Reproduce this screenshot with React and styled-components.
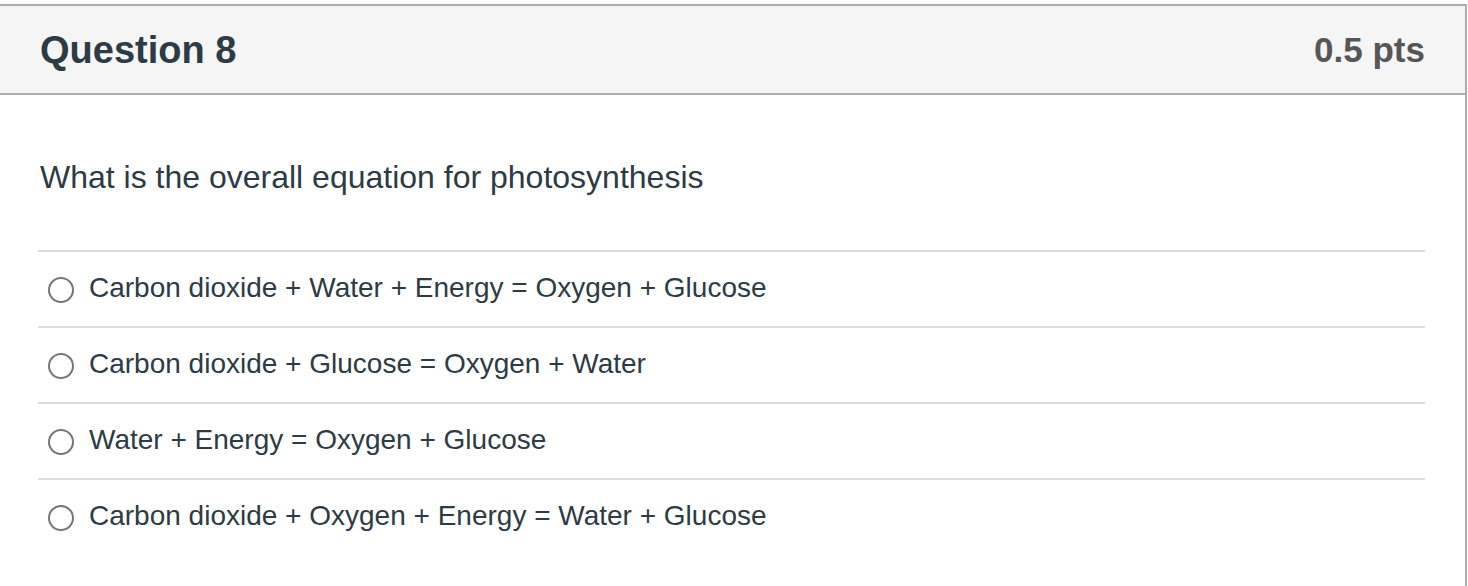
import React from "react";
import styled, { createGlobalStyle } from "styled-components";

const Global = createGlobalStyle`
  html, body { margin: 0; padding: 0; background: #ffffff; overflow: hidden; }
  body { font-family: "Liberation Sans", Arial, Helvetica, sans-serif; color: #2d3b45; }
`;

const Card = styled.section`
  box-sizing: border-box;
  min-height: calc(100vh - 4px);
  margin: 4px 1px 0 0;
  border: 2px solid #adadad;
  border-left: 0;
  border-bottom: 0;
  background: #fff;
`;

const Header = styled.header`
  display: flex;
  align-items: center;
  justify-content: space-between;
  height: 87px;
  padding: 0 40px;
  background: #f5f5f5;
  border-bottom: 2px solid #adadad;
`;

const Title = styled.h2`
  margin: 0;
  font-size: 38px;
  font-weight: 700;
  color: #2d3b45;
  line-height: 1;
`;

const Points = styled.span`
  font-size: 35px;
  font-weight: 700;
  color: #565656;
  line-height: 1;
`;

const Body = styled.div`
  padding: 0 40px 0 38px;
`;

const Prompt = styled.p`
  margin: 0;
  padding: 58px 0 49px 2px;
  font-size: 32px;
  line-height: 48px;
  color: #2d3b45;
`;

const Answers = styled.div`
  display: flex;
  flex-direction: column;
`;

const Row = styled.label`
  display: flex;
  align-items: center;
  height: 74px;
  border-top: 2px solid #dcdcdc;
  padding-left: 10px;
  cursor: pointer;
`;

const Radio = styled.span`
  flex: none;
  width: 22px;
  height: 22px;
  border-radius: 50%;
  border: 2px solid #767676;
  background: #fff;
  margin-top: 2px;
`;

const AnswerText = styled.span`
  margin-left: 15px;
  margin-bottom: 3px;
  font-size: 28px;
  line-height: 1.2;
  color: #2d3b45;
`;

const answers = [
  "Carbon dioxide + Water + Energy = Oxygen + Glucose",
  "Carbon dioxide + Glucose = Oxygen + Water",
  "Water + Energy = Oxygen + Glucose",
  "Carbon dioxide + Oxygen + Energy = Water + Glucose",
];

export default function App() {
  return (
    <>
      <Global />
      <Card>
        <Header>
          <Title>Question 8</Title>
          <Points>0.5 pts</Points>
        </Header>
        <Body>
          <Prompt>What is the overall equation for photosynthesis</Prompt>
          <Answers>
            {answers.map((a) => (
              <Row key={a}>
                <Radio />
                <AnswerText>{a}</AnswerText>
              </Row>
            ))}
          </Answers>
        </Body>
      </Card>
    </>
  );
}
